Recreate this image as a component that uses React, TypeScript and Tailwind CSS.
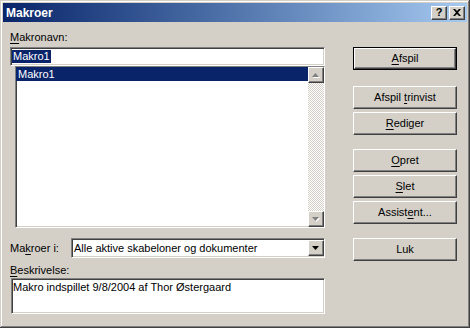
import React from 'react';

const font = { fontFamily: '"Liberation Sans", Arial, sans-serif' };

const raised =
  'border border-t-white border-l-white border-r-[#404040] border-b-[#404040] shadow-[inset_-1px_-1px_#808080,inset_1px_1px_#d4d0c8]';
const sunken =
  'border border-t-[#808080] border-l-[#808080] border-r-white border-b-white shadow-[inset_1px_1px_#404040,inset_-1px_-1px_#d4d0c8]';

function U({ children }: { children: React.ReactNode }) {
  return <span className="underline underline-offset-[2px]">{children}</span>;
}

function Btn({ children, isDefault, className = '' }: { children: React.ReactNode; isDefault?: boolean; className?: string }) {
  if (isDefault) {
    return (
      <div className={`h-[23px] w-[104px] border border-black ${className}`}>
        <div className={`flex h-full w-full items-center justify-center text-[11px] text-black ${raised}`}>{children}</div>
      </div>
    );
  }
  return (
    <div className={`flex h-[23px] w-[104px] items-center justify-center text-[11px] text-black ${raised} ${className}`}>
      {children}
    </div>
  );
}

function Arrow({ up, disabled }: { up?: boolean; disabled?: boolean }) {
  const d = up ? 'M3.5 0L7 4H0z' : 'M0 0h7L3.5 4z';
  return (
    <svg width="8" height="5" viewBox="0 0 8 5">
      {disabled && <path d={d} fill="#ffffff" transform="translate(1 1)" />}
      <path d={d} fill={disabled ? '#808080' : '#000000'} />
    </svg>
  );
}

function ScrollBtn({ up }: { up?: boolean }) {
  return (
    <div className={`flex h-[16px] w-[16px] shrink-0 items-center justify-center bg-[#d4d0c8] ${raised}`}>
      <Arrow up={up} disabled />
    </div>
  );
}

export default function App() {
  return (
    <div
      className="flex h-[328px] w-[470px] flex-col bg-[#d4d0c8] p-[3px] shadow-[inset_-1px_-1px_#404040,inset_1px_1px_#d4d0c8,inset_-2px_-2px_#808080,inset_2px_2px_#ffffff]"
      style={font}
    >
      {/* title bar */}
      <div className="flex h-[19px] shrink-0 items-center bg-gradient-to-r from-[#0a246a] to-[#a6caf0] pl-[3px] pr-[2px]">
        <span className="text-[12px] font-bold text-white">Makroer</span>
        <div className="ml-auto flex items-center gap-[2px]">
          <div className={`flex h-[14px] w-[16px] items-center justify-center bg-[#d4d0c8] text-[11px] font-bold leading-none text-black ${raised}`}>
            ?
          </div>
          <div className={`flex h-[14px] w-[16px] items-center justify-center bg-[#d4d0c8] ${raised}`}>
            <svg width="8" height="7" viewBox="0 0 8 7">
              <path d="M0 0h2l2 2 2-2h2L5 3.5 8 7H6L4 5 2 7H0l3-3.5z" fill="#000" />
            </svg>
          </div>
        </div>
      </div>

      <div className="flex pl-[7px]">
        {/* left column */}
        <div className="flex w-[315px] flex-col">
          <div className="mt-[9px] h-[13px] text-[11px] leading-[13px] text-black">
            <U>M</U>akronavn:
          </div>
          <div className={`mt-[3px] flex h-[19px] items-center bg-white pl-[1px] ${sunken}`}>
            <span className="bg-[#0a246a] px-[1px] text-[11px] leading-[13px] text-white">Makro1</span>
          </div>
          <div className={`ml-[5px] flex h-[162px] bg-white ${sunken}`}>
            <div className="flex-1">
              <div className="h-[14px] bg-[#0a246a] pl-[2px] text-[11px] leading-[14px] text-white">Makro1</div>
            </div>
            <div className="flex w-[16px] flex-col bg-[repeating-conic-gradient(#d4d0c8_0_25%,#ffffff_0_50%)] bg-[length:2px_2px]">
              <ScrollBtn up />
              <div className="flex-1" />
              <ScrollBtn />
            </div>
          </div>
          <div className="mt-[10px] flex h-[20px] items-center">
            <div className="w-[61px] text-[11px] text-black">
              Ma<U>k</U>roer i:
            </div>
            <div className={`flex h-[20px] flex-1 items-center bg-white ${sunken}`}>
              <span className="flex-1 pl-[2px] text-[11px] text-black">Alle aktive skabeloner og dokumenter</span>
              <div className={`flex h-[16px] w-[16px] items-center justify-center bg-[#d4d0c8] ${raised}`}>
                <Arrow />
              </div>
            </div>
          </div>
          <div className="mt-[6px] h-[13px] text-[11px] leading-[13px] text-black">
            <U>B</U>eskrivelse:
          </div>
          <div className={`ml-[1px] mt-[1px] h-[36px] bg-white px-[1px] pt-[2px] text-[11px] leading-[13px] text-black ${sunken}`}>
            Makro indspillet 9/8/2004 af Thor Østergaard
          </div>
        </div>

        {/* right column */}
        <div className="ml-[28px] flex flex-col">
          <Btn isDefault className="mt-[25px]">
            <U>A</U>fspil
          </Btn>
          <Btn className="mt-[16px]">
            Afspil&nbsp;<U>t</U>rinvist
          </Btn>
          <Btn className="mt-[3px]">
            <U>R</U>ediger
          </Btn>
          <Btn className="mt-[14px]">
            <U>O</U>pret
          </Btn>
          <Btn className="mt-[3px]">
            <U>S</U>let
          </Btn>
          <Btn className="mt-[3px]">
            Assist<U>e</U>nt...
          </Btn>
          <Btn className="mt-[14px]">Luk</Btn>
        </div>
      </div>
    </div>
  );
}
